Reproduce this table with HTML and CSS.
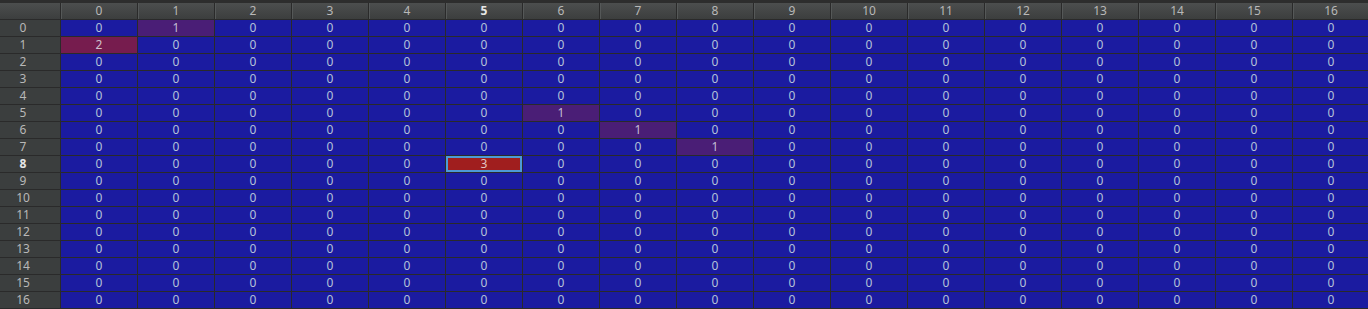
FILE: index.html
```html
<!DOCTYPE html>
<html>
<head>
<meta charset="utf-8">
<link rel="stylesheet" href="styles.css">
</head>
<body>
<div class="topstrip"></div>
<div class="grid">
<div class="corner"></div><div class="ch">0</div><div class="ch">1</div><div class="ch">2</div><div class="ch">3</div><div class="ch">4</div><div class="ch cur">5</div><div class="ch">6</div><div class="ch">7</div><div class="ch">8</div><div class="ch">9</div><div class="ch">10</div><div class="ch">11</div><div class="ch">12</div><div class="ch">13</div><div class="ch">14</div><div class="ch">15</div><div class="ch">16</div>

<div class="rh">0</div><div class="c">0</div><div class="c v1">1</div><div class="c">0</div><div class="c">0</div><div class="c">0</div><div class="c">0</div><div class="c">0</div><div class="c">0</div><div class="c">0</div><div class="c">0</div><div class="c">0</div><div class="c">0</div><div class="c">0</div><div class="c">0</div><div class="c">0</div><div class="c">0</div><div class="c">0</div>
<div class="rh">1</div><div class="c v2">2</div><div class="c">0</div><div class="c">0</div><div class="c">0</div><div class="c">0</div><div class="c">0</div><div class="c">0</div><div class="c">0</div><div class="c">0</div><div class="c">0</div><div class="c">0</div><div class="c">0</div><div class="c">0</div><div class="c">0</div><div class="c">0</div><div class="c">0</div><div class="c">0</div>
<div class="rh">2</div><div class="c">0</div><div class="c">0</div><div class="c">0</div><div class="c">0</div><div class="c">0</div><div class="c">0</div><div class="c">0</div><div class="c">0</div><div class="c">0</div><div class="c">0</div><div class="c">0</div><div class="c">0</div><div class="c">0</div><div class="c">0</div><div class="c">0</div><div class="c">0</div><div class="c">0</div>
<div class="rh">3</div><div class="c">0</div><div class="c">0</div><div class="c">0</div><div class="c">0</div><div class="c">0</div><div class="c">0</div><div class="c">0</div><div class="c">0</div><div class="c">0</div><div class="c">0</div><div class="c">0</div><div class="c">0</div><div class="c">0</div><div class="c">0</div><div class="c">0</div><div class="c">0</div><div class="c">0</div>
<div class="rh">4</div><div class="c">0</div><div class="c">0</div><div class="c">0</div><div class="c">0</div><div class="c">0</div><div class="c">0</div><div class="c">0</div><div class="c">0</div><div class="c">0</div><div class="c">0</div><div class="c">0</div><div class="c">0</div><div class="c">0</div><div class="c">0</div><div class="c">0</div><div class="c">0</div><div class="c">0</div>
<div class="rh">5</div><div class="c">0</div><div class="c">0</div><div class="c">0</div><div class="c">0</div><div class="c">0</div><div class="c">0</div><div class="c v1">1</div><div class="c">0</div><div class="c">0</div><div class="c">0</div><div class="c">0</div><div class="c">0</div><div class="c">0</div><div class="c">0</div><div class="c">0</div><div class="c">0</div><div class="c">0</div>
<div class="rh">6</div><div class="c">0</div><div class="c">0</div><div class="c">0</div><div class="c">0</div><div class="c">0</div><div class="c">0</div><div class="c">0</div><div class="c v1">1</div><div class="c">0</div><div class="c">0</div><div class="c">0</div><div class="c">0</div><div class="c">0</div><div class="c">0</div><div class="c">0</div><div class="c">0</div><div class="c">0</div>
<div class="rh">7</div><div class="c">0</div><div class="c">0</div><div class="c">0</div><div class="c">0</div><div class="c">0</div><div class="c">0</div><div class="c">0</div><div class="c">0</div><div class="c v1">1</div><div class="c">0</div><div class="c">0</div><div class="c">0</div><div class="c">0</div><div class="c">0</div><div class="c">0</div><div class="c">0</div><div class="c">0</div>
<div class="rh cur">8</div><div class="c">0</div><div class="c">0</div><div class="c">0</div><div class="c">0</div><div class="c">0</div><div class="c v3 sel">3</div><div class="c">0</div><div class="c">0</div><div class="c">0</div><div class="c">0</div><div class="c">0</div><div class="c">0</div><div class="c">0</div><div class="c">0</div><div class="c">0</div><div class="c">0</div><div class="c">0</div>
<div class="rh">9</div><div class="c">0</div><div class="c">0</div><div class="c">0</div><div class="c">0</div><div class="c">0</div><div class="c">0</div><div class="c">0</div><div class="c">0</div><div class="c">0</div><div class="c">0</div><div class="c">0</div><div class="c">0</div><div class="c">0</div><div class="c">0</div><div class="c">0</div><div class="c">0</div><div class="c">0</div>
<div class="rh">10</div><div class="c">0</div><div class="c">0</div><div class="c">0</div><div class="c">0</div><div class="c">0</div><div class="c">0</div><div class="c">0</div><div class="c">0</div><div class="c">0</div><div class="c">0</div><div class="c">0</div><div class="c">0</div><div class="c">0</div><div class="c">0</div><div class="c">0</div><div class="c">0</div><div class="c">0</div>
<div class="rh">11</div><div class="c">0</div><div class="c">0</div><div class="c">0</div><div class="c">0</div><div class="c">0</div><div class="c">0</div><div class="c">0</div><div class="c">0</div><div class="c">0</div><div class="c">0</div><div class="c">0</div><div class="c">0</div><div class="c">0</div><div class="c">0</div><div class="c">0</div><div class="c">0</div><div class="c">0</div>
<div class="rh">12</div><div class="c">0</div><div class="c">0</div><div class="c">0</div><div class="c">0</div><div class="c">0</div><div class="c">0</div><div class="c">0</div><div class="c">0</div><div class="c">0</div><div class="c">0</div><div class="c">0</div><div class="c">0</div><div class="c">0</div><div class="c">0</div><div class="c">0</div><div class="c">0</div><div class="c">0</div>
<div class="rh">13</div><div class="c">0</div><div class="c">0</div><div class="c">0</div><div class="c">0</div><div class="c">0</div><div class="c">0</div><div class="c">0</div><div class="c">0</div><div class="c">0</div><div class="c">0</div><div class="c">0</div><div class="c">0</div><div class="c">0</div><div class="c">0</div><div class="c">0</div><div class="c">0</div><div class="c">0</div>
<div class="rh">14</div><div class="c">0</div><div class="c">0</div><div class="c">0</div><div class="c">0</div><div class="c">0</div><div class="c">0</div><div class="c">0</div><div class="c">0</div><div class="c">0</div><div class="c">0</div><div class="c">0</div><div class="c">0</div><div class="c">0</div><div class="c">0</div><div class="c">0</div><div class="c">0</div><div class="c">0</div>
<div class="rh">15</div><div class="c">0</div><div class="c">0</div><div class="c">0</div><div class="c">0</div><div class="c">0</div><div class="c">0</div><div class="c">0</div><div class="c">0</div><div class="c">0</div><div class="c">0</div><div class="c">0</div><div class="c">0</div><div class="c">0</div><div class="c">0</div><div class="c">0</div><div class="c">0</div><div class="c">0</div>
<div class="rh">16</div><div class="c">0</div><div class="c">0</div><div class="c">0</div><div class="c">0</div><div class="c">0</div><div class="c">0</div><div class="c">0</div><div class="c">0</div><div class="c">0</div><div class="c">0</div><div class="c">0</div><div class="c">0</div><div class="c">0</div><div class="c">0</div><div class="c">0</div><div class="c">0</div><div class="c">0</div>
</div>
</body>
</html>
```

FILE: styles.css
```css
html, body {
  margin: 0;
  padding: 0;
  background: #2a2a2a;
  overflow: hidden;
  width: 1368px;
  height: 309px;
}

body {
  font-family: "Noto Sans", "DejaVu Sans", sans-serif;
  font-size: 12px;
}

.topstrip {
  height: 3px;
  background: #2d2d2d;
}

.grid {
  display: grid;
  grid-template-columns: 60px repeat(17, 76px);
  grid-auto-rows: 16px;
  column-gap: 1px;
  row-gap: 1px;
  background: #2a2a2a;
  width: 1370px;
}

.corner,
.ch {
  background: linear-gradient(to bottom, #4c4e4e 0%, #444646 50%, #3c3e3e 100%);
}

.ch {
  color: #b8b8b8;
  display: flex;
  align-items: center;
  justify-content: center;
  box-shadow: inset 1px 0 0 #555858;
  line-height: 16px;
}

.ch.cur,
.rh.cur {
  color: #e6e6e6;
  font-weight: bold;
}

.rh {
  background: #3b3e3e;
  color: #b8b8b8;
  display: flex;
  align-items: center;
  justify-content: center;
  padding-right: 14px;
  line-height: 16px;
}

.c {
  background: #1b1ba0;
  color: #b4c2d8;
  display: flex;
  align-items: center;
  justify-content: center;
  line-height: 16px;
}

.c.v1 {
  background: #4a1e76;
  color: #c4bcd4;
}

.c.v2 {
  background: #761c4e;
  color: #d0c0cc;
}

.c.v3 {
  background: #a01e1e;
  color: #e2c4c4;
}

.c.sel {
  box-shadow: inset 0 0 0 2px #4d9ad6;
}
```
